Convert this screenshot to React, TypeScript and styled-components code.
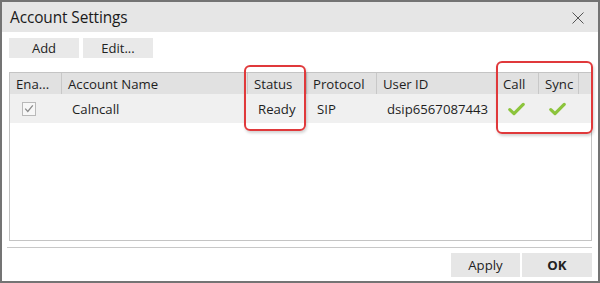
import React from 'react'
import styled, { createGlobalStyle } from 'styled-components'

const GlobalStyle = createGlobalStyle`
  html, body {
    margin: 0;
    padding: 0;
    background: #ffffff;
  }
  body {
    font-family: "Open Sans", "Noto Sans", "Liberation Sans", sans-serif;
    color: #1e1e1e;
  }
`

const WindowStyled = styled.div`
  width: 600px;
  height: 283px;
  box-sizing: border-box;
  border: 2px solid #747474;
  background: #ffffff;
  display: flex;
  flex-direction: column;
`

const TitleBarStyled = styled.div`
  height: 30px;
  background: #e6e6e6;
  display: flex;
  align-items: center;
  justify-content: space-between;
  padding: 0 14px 0 8px;
  flex-shrink: 0;
`

const TitleStyled = styled.div`
  font-size: 15.4px;
  color: #1a1a1a;
  letter-spacing: -0.1px;
`

const CloseStyled = styled.svg`
  width: 12px;
  height: 12px;
  margin-top: 1px;
`

const ToolbarStyled = styled.div`
  display: flex;
  gap: 4px;
  padding: 6px 0 0 7px;
  height: 20px;
`

const ToolButtonStyled = styled.div`
  width: 70px;
  height: 20px;
  background: #e9e9e9;
  font-size: 13px;
  display: flex;
  align-items: center;
  justify-content: center;
  color: #222;
`

const TableWrapStyled = styled.div`
  position: relative;
  margin: 14px 6px 0 7px;
  height: 169px;
  box-sizing: border-box;
  border: 1px solid #c4c4c4;
`

const RowStyled = styled.div<{ $header?: boolean }>`
  display: grid;
  grid-template-columns: 52px 186px 59px 70px 120px 42px 40px 1fr;
  height: ${props => (props.$header ? '21px' : '29px')};
  background: ${props => (props.$header ? '#e1e1e1' : '#f0f0f0')};
  font-size: 13.2px;
  color: #1e1e1e;
`

const CellStyled = styled.div<{ $header?: boolean; $pad?: number }>`
  display: flex;
  align-items: center;
  padding-left: ${props => props.$pad ?? 6}px;
  white-space: nowrap;
  overflow: hidden;
  border-right: ${props => (props.$header ? '1px solid #c8c8c8' : 'none')};
  &:last-child {
    border-right: none;
  }
`

const CheckBoxStyled = styled.div`
  width: 12px;
  height: 12px;
  border: 1px solid #b9b9b9;
  background: #f7f7f7;
  display: flex;
  align-items: center;
  justify-content: center;
`

const HighlightStyled = styled.div<{ $left: number; $top: number; $w: number; $h: number }>`
  position: absolute;
  left: ${props => props.$left}px;
  top: ${props => props.$top}px;
  width: ${props => props.$w}px;
  height: ${props => props.$h}px;
  box-sizing: border-box;
  border: 2px solid #e0393b;
  border-radius: 6px;
  box-shadow: 1px 2px 3px rgba(0, 0, 0, 0.18);
  pointer-events: none;
`

const SeparatorStyled = styled.div`
  margin: 6px 6px 0 5px;
  height: 1px;
  background: #c8c8c8;
`

const FooterStyled = styled.div`
  display: flex;
  justify-content: flex-end;
  gap: 2px;
  padding: 5px 6px 0 0;
`

const FooterButtonStyled = styled.div<{ $primary?: boolean }>`
  width: ${props => (props.$primary ? '70px' : '69px')};
  height: 24px;
  background: #e6e6e6;
  font-size: 13.2px;
  font-weight: ${props => (props.$primary ? 700 : 400)};
  display: flex;
  align-items: center;
  justify-content: center;
  color: #222;
`

function GreenCheck() {
  return (
    <svg width="17" height="14" viewBox="0 0 17 14">
      <path d="M1.8 7.6 L6 11.6 L15.2 2.4" fill="none" stroke="#8cc43c" strokeWidth="3.2" strokeLinecap="round" strokeLinejoin="round" />
    </svg>
  )
}

const columns = ['Ena...', 'Account Name', 'Status', 'Protocol', 'User ID', 'Call', 'Sync', '']

function App() {
  return (
    <>
      <GlobalStyle />
      <WindowStyled>
        <TitleBarStyled>
          <TitleStyled>Account Settings</TitleStyled>
          <CloseStyled viewBox="0 0 12 12">
            <path d="M0.5 0.5 L11.5 11.5 M11.5 0.5 L0.5 11.5" stroke="#555" strokeWidth="1" />
          </CloseStyled>
        </TitleBarStyled>
        <ToolbarStyled>
          <ToolButtonStyled>Add</ToolButtonStyled>
          <ToolButtonStyled>Edit...</ToolButtonStyled>
        </ToolbarStyled>
        <TableWrapStyled>
          <RowStyled $header>
            {columns.map((c, i) => (
              <CellStyled key={i} $header>{c}</CellStyled>
            ))}
          </RowStyled>
          <RowStyled>
            <CellStyled $pad={12}>
              <CheckBoxStyled>
                <svg width="10" height="9" viewBox="0 0 10 9">
                  <path d="M1.2 4.6 L3.8 7.4 L8.8 1.4" fill="none" stroke="#8a8a8a" strokeWidth="1.3" />
                </svg>
              </CheckBoxStyled>
            </CellStyled>
            <CellStyled $pad={10}>Calncall</CellStyled>
            <CellStyled $pad={10}>Ready</CellStyled>
            <CellStyled $pad={10}>SIP</CellStyled>
            <CellStyled $pad={10}>dsip6567087443</CellStyled>
            <CellStyled $pad={11}><GreenCheck /></CellStyled>
            <CellStyled $pad={10}><GreenCheck /></CellStyled>
            <CellStyled />
          </RowStyled>
          <HighlightStyled $left={234} $top={-8} $w={62} $h={66} />
          <HighlightStyled $left={486} $top={-12} $w={97} $h={73} />
        </TableWrapStyled>
        <SeparatorStyled />
        <FooterStyled>
          <FooterButtonStyled>Apply</FooterButtonStyled>
          <FooterButtonStyled $primary>OK</FooterButtonStyled>
        </FooterStyled>
      </WindowStyled>
    </>
  )
}

export default App
